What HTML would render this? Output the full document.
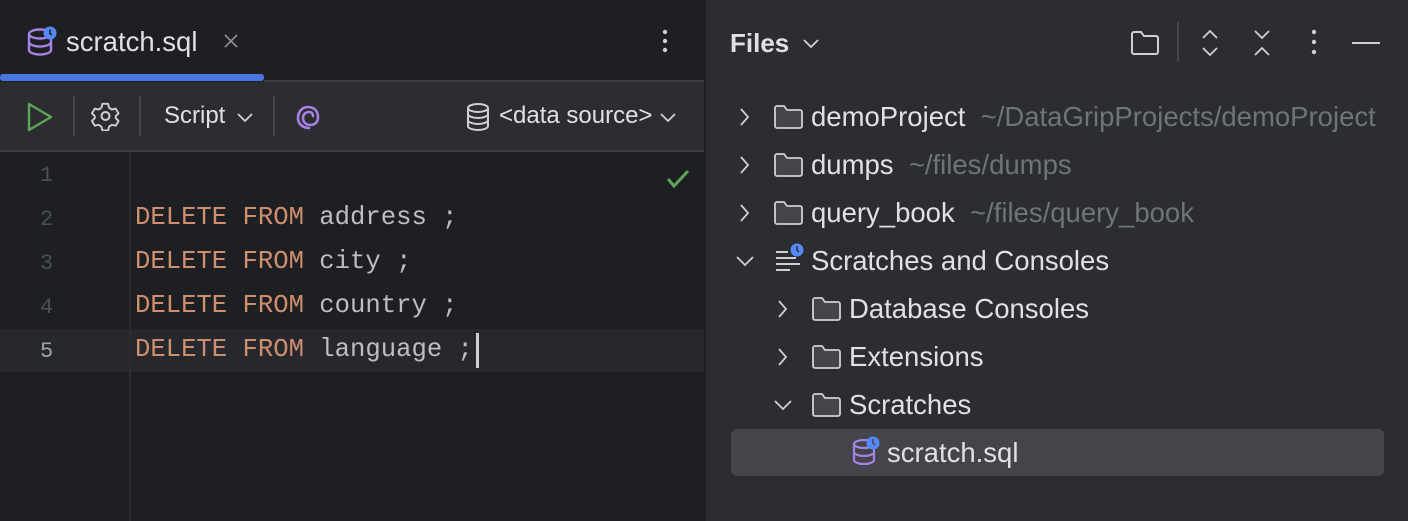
<!DOCTYPE html>
<html><head><meta charset="utf-8"><style>
*{margin:0;padding:0;box-sizing:border-box}
body{width:1408px;height:521px;overflow:hidden;background:#1e1f22;font-family:"Liberation Sans",sans-serif;position:relative}
.abs{position:absolute}
.left{left:0;top:0;width:704px;height:521px;background:#1e1f22}
.right{left:706px;top:0;width:702px;height:521px;background:#2b2d30}
.t{position:absolute;white-space:nowrap;color:#dfe1e5}
.code{font-family:"Liberation Mono",monospace;font-size:25.6px;position:absolute;left:135px;white-space:pre;color:#bcbec4}
.kw{color:#cf8e6d}
.ln{font-family:"Liberation Mono",monospace;font-size:22px;color:#4b5059;position:absolute;left:40px}
.row{position:absolute;font-size:27.5px;color:#dfe1e5;white-space:nowrap}
.gray{color:#6f737a}
</style></head><body>
<div class="abs left">
  <svg class="abs" style="left:26px;top:26px" width="32" height="32" viewBox="0 0 32 32">
    <g fill="none" stroke="#a681e6" stroke-width="2.4"><ellipse cx="14" cy="8" rx="11" ry="4.5"/><path d="M3 8v16c0 2.5 5 4.5 11 4.5s11-2 11-4.5V8M3 16c0 2.5 5 4.5 11 4.5s11-2 11-4.5"/></g>
    <circle cx="24" cy="7" r="6.5" fill="#548af7"/><path d="M24 3.5v4l2 1.5" stroke="#1e1f22" stroke-width="1.6" fill="none"/>
  </svg>
  <div class="t" style="left:66px;top:26px;font-size:27.5px;color:#dfe1e5">scratch.sql</div>
  <svg class="abs" style="left:223px;top:33px" width="16" height="16"><path d="M2 2L14 14M14 2L2 14" stroke="#8c8f94" stroke-width="1.6"/></svg>
  <svg class="abs" style="left:660px;top:28px" width="10" height="28"><circle cx="5" cy="4" r="2.2" fill="#ced0d6"/><circle cx="5" cy="13" r="2.2" fill="#ced0d6"/><circle cx="5" cy="22" r="2.2" fill="#ced0d6"/></svg>
  <div class="abs" style="left:0;top:74px;width:264px;height:7px;background:#4a76e2;border-radius:3px"></div>
  <div class="abs" style="left:264px;top:80px;width:440px;height:2px;background:#393b40"></div>
  <div class="abs" style="left:0;top:82px;width:704px;height:68px;background:#2b2d30"></div>
  <div class="abs" style="left:0;top:150px;width:704px;height:2px;background:#393b40"></div>
  <svg class="abs" style="left:26px;top:101px" width="28" height="32"><path d="M3 3L25 16L3 29Z" fill="none" stroke="#5fa35a" stroke-width="2.4" stroke-linejoin="round"/></svg>
  <div class="abs" style="left:73px;top:96px;width:2px;height:40px;background:#43454a"></div>
  <svg class="abs" style="left:91px;top:101px" width="30" height="30" viewBox="0 0 30 30"><path d="M12 3h6l1 4 3 2 4-1 3 5-3 3v2l3 3-3 5-4-1-3 2-1 4h-6l-1-4-3-2-4 1-3-5 3-3v-2L1 13l3-5 4 1 3-2z" fill="none" stroke="#ced0d6" stroke-width="2" stroke-linejoin="round" transform="scale(0.95)"/><circle cx="14.5" cy="15" r="4" fill="none" stroke="#ced0d6" stroke-width="2"/></svg>
  <div class="abs" style="left:139px;top:96px;width:2px;height:40px;background:#43454a"></div>
  <div class="t" style="left:164px;top:102px;font-size:24px">Script</div>
  <svg class="abs" style="left:236px;top:111px" width="18" height="12"><path d="M2 3l7 7 7-7" stroke="#ced0d6" stroke-width="1.8" fill="none"/></svg>
  <div class="abs" style="left:273px;top:96px;width:2px;height:40px;background:#43454a"></div>
  <svg class="abs" style="left:293px;top:102px" width="30" height="30" viewBox="0 0 30 30"><path d="M16 26c-6 0-11-4-11-10S9 5 15 5s10 4 10 10-4 8-8 8-7-3-7-7 3-6 6-6 4 2 4 4" fill="none" stroke="#a681e6" stroke-width="2.6" stroke-linecap="round"/></svg>
  <svg class="abs" style="left:465px;top:102px" width="26" height="30" viewBox="0 0 26 30"><g fill="none" stroke="#ced0d6" stroke-width="2"><ellipse cx="13" cy="6" rx="10" ry="4"/><path d="M3 6v18c0 2.2 4.5 4 10 4s10-1.8 10-4V6M3 12c0 2.2 4.5 4 10 4s10-1.8 10-4M3 18c0 2.2 4.5 4 10 4s10-1.8 10-4"/></g></svg>
  <div class="t" style="left:499px;top:102px;font-size:24px">&lt;data source&gt;</div>
  <svg class="abs" style="left:659px;top:111px" width="18" height="12"><path d="M2 3l7 7 7-7" stroke="#ced0d6" stroke-width="1.8" fill="none"/></svg>
  <div class="abs" style="left:0;top:329px;width:704px;height:43px;background:#26282e"></div>
  <div class="abs" style="left:129px;top:152px;width:2px;height:369px;background:#2b2d30"></div>
  <div class="ln" style="top:163px">1</div>
  <div class="ln" style="top:207px">2</div>
  <div class="ln" style="top:251px">3</div>
  <div class="ln" style="top:295px">4</div>
  <div class="ln" style="top:339px;color:#a1a3ab">5</div>
  <svg class="abs" style="left:665px;top:168px" width="26" height="22"><path d="M3 11l6 7L23 3" stroke="#5fa35a" stroke-width="3" fill="none"/></svg>
  <div class="code" style="top:203px"><span class="kw">DELETE FROM</span> address ;</div>
  <div class="code" style="top:247px"><span class="kw">DELETE FROM</span> city ;</div>
  <div class="code" style="top:291px"><span class="kw">DELETE FROM</span> country ;</div>
  <div class="code" style="top:335px"><span class="kw">DELETE FROM</span> language ;</div>
  <div class="abs" style="left:476px;top:333px;width:3px;height:35px;background:#ced0d6"></div>
</div>
<div class="abs right">
  <div class="t" style="left:24px;top:28px;font-size:26px;font-weight:bold">Files</div>
  <svg class="abs" style="left:96px;top:37px" width="18" height="12"><path d="M2 3l7 7 7-7" stroke="#ced0d6" stroke-width="1.8" fill="none"/></svg>
  <svg class="abs" style="left:424px;top:30px" width="30" height="26"><path d="M2 4a2 2 0 0 1 2-2h7l3 4h12a2 2 0 0 1 2 2v14a2 2 0 0 1-2 2H4a2 2 0 0 1-2-2z" fill="none" stroke="#ced0d6" stroke-width="2"/></svg>
  <div class="abs" style="left:471px;top:22px;width:2px;height:40px;background:#43454a"></div>
  <svg class="abs" style="left:494px;top:28px" width="20" height="30"><path d="M3 10l7-7 7 7M3 20l7 7 7-7" stroke="#ced0d6" stroke-width="1.8" fill="none"/></svg>
  <svg class="abs" style="left:546px;top:28px" width="20" height="30"><path d="M3 3l7 7 7-7M3 27l7-7 7 7" stroke="#ced0d6" stroke-width="1.8" fill="none"/></svg>
  <svg class="abs" style="left:603px;top:28px" width="10" height="28"><circle cx="5" cy="4" r="2.2" fill="#ced0d6"/><circle cx="5" cy="14" r="2.2" fill="#ced0d6"/><circle cx="5" cy="24" r="2.2" fill="#ced0d6"/></svg>
  <div class="abs" style="left:646px;top:42px;width:28px;height:2px;background:#ced0d6"></div>
  <div class="abs" style="left:25px;top:429px;width:653px;height:47px;background:#43454a;border-radius:6px"></div>
</div>
<svg class="abs" style="left:0;top:0" width="1408" height="521">
  <g fill="none" stroke="#ced0d6" stroke-width="1.8">
    <path d="M741 109l7 8-7 8M741 157l7 8-7 8M741 205l7 8-7 8"/>
    <path d="M737 257l8 8 8-8"/>
    <path d="M779 301l7 8-7 8M779 349l7 8-7 8"/>
    <path d="M775 401l8 8 8-8"/>
  </g>
  <g fill="#43454a" stroke="#ced0d6" stroke-width="1.8">
    <path d="M775 108a2 2 0 0 1 2-2h7l3 4h13a2 2 0 0 1 2 2v14a2 2 0 0 1-2 2H777a2 2 0 0 1-2-2z"/>
    <path d="M775 156a2 2 0 0 1 2-2h7l3 4h13a2 2 0 0 1 2 2v14a2 2 0 0 1-2 2H777a2 2 0 0 1-2-2z"/>
    <path d="M775 204a2 2 0 0 1 2-2h7l3 4h13a2 2 0 0 1 2 2v14a2 2 0 0 1-2 2H777a2 2 0 0 1-2-2z"/>
    <path d="M813 300a2 2 0 0 1 2-2h7l3 4h13a2 2 0 0 1 2 2v14a2 2 0 0 1-2 2H815a2 2 0 0 1-2-2z"/>
    <path d="M813 348a2 2 0 0 1 2-2h7l3 4h13a2 2 0 0 1 2 2v14a2 2 0 0 1-2 2H815a2 2 0 0 1-2-2z"/>
    <path d="M813 396a2 2 0 0 1 2-2h7l3 4h13a2 2 0 0 1 2 2v14a2 2 0 0 1-2 2H815a2 2 0 0 1-2-2z"/>
  </g>
  <g stroke="#ced0d6" stroke-width="2"><path d="M776 252h12M776 258h20M776 264h24M776 270h14"/></g>
  <circle cx="797" cy="250" r="6.5" fill="#548af7"/><path d="M797 246v4l2 2" stroke="#2b2d30" stroke-width="1.5" fill="none"/>
  <g fill="none" stroke="#a681e6" stroke-width="2.2"><ellipse cx="864" cy="444" rx="10" ry="4"/><path d="M854 444v16c0 2.2 4.5 4 10 4s10-1.8 10-4v-16M854 452c0 2.2 4.5 4 10 4s10-1.8 10-4"/></g>
  <circle cx="873" cy="443" r="6.5" fill="#548af7"/><path d="M873 439v4l2 2" stroke="#43454a" stroke-width="1.5" fill="none"/>
</svg>
<div class="row" style="left:811px;top:101px">demoProject <span class="gray">&nbsp;~/DataGripProjects/demoProject</span></div>
<div class="row" style="left:811px;top:149px">dumps <span class="gray">&nbsp;~/files/dumps</span></div>
<div class="row" style="left:811px;top:197px">query_book <span class="gray">&nbsp;~/files/query_book</span></div>
<div class="row" style="left:811px;top:245px">Scratches and Consoles</div>
<div class="row" style="left:849px;top:293px">Database Consoles</div>
<div class="row" style="left:849px;top:341px">Extensions</div>
<div class="row" style="left:849px;top:389px">Scratches</div>
<div class="row" style="left:887px;top:437px">scratch.sql</div>
</body></html>
